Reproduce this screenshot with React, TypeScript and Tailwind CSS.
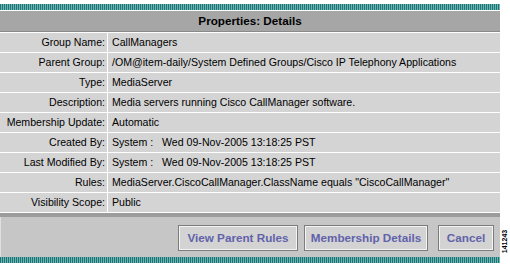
import React from "react";

const ROWS: [string, string][] = [
  ["Group Name:", "CallManagers"],
  ["Parent Group:", "/OM@item-daily/System Defined Groups/Cisco IP Telephony Applications"],
  ["Type:", "MediaServer"],
  ["Description:", "Media servers running Cisco CallManager software."],
  ["Membership Update:", "Automatic"],
  ["Created By:", "System :\u00a0\u00a0\u00a0Wed 09-Nov-2005 13:18:25 PST"],
  ["Last Modified By:", "System :\u00a0\u00a0\u00a0Wed 09-Nov-2005 13:18:25 PST"],
  ["Rules:", 'MediaServer.CiscoCallManager.ClassName equals "CiscoCallManager"'],
  ["Visibility Scope:", "Public"],
];

const stripe =
  "h-[6px] bg-[repeating-linear-gradient(90deg,#1e7474_0px,#1e7474_1px,#6fb4b4_1px,#6fb4b4_2px)]";

function Button({ label, className }: { label: string; className?: string }) {
  return (
    <button
      className={`h-[26px] border border-[#7c7c7c] bg-[#d3d3d3] shadow-[inset_1px_1px_0_#f4f4f4,inset_-1px_-1px_0_#f4f4f4] text-[11.7px] font-bold text-[#6262aa] ${className ?? ""}`}
    >
      {label}
    </button>
  );
}

export default function App() {
  return (
    <div className="relative w-[510px] h-[265px] bg-white font-['Liberation_Sans',Arial,sans-serif] text-black">
      <div className="w-[500px] pt-[4px]">
        <div className={stripe} />
        <div className="mt-[1px] h-[21px] bg-[#a6a6a6] border-b border-[#8a8a8a] flex items-center justify-center text-[11.7px] font-bold">
          Properties: Details
        </div>
        <div className="border-t border-white">
          {ROWS.map(([label, value]) => (
            <div key={label} className="flex h-[20px] border-b border-white text-[10.6px]">
              <div className="w-[108px] shrink-0 bg-[#d4d4d4] border-r border-white flex items-center justify-end pr-[2px] whitespace-nowrap">
                {label}
              </div>
              <div className="flex-1 bg-[#d4d4d4] flex items-center pl-[4px] whitespace-nowrap">
                {value}
              </div>
            </div>
          ))}
        </div>
        <div className="h-[4px] bg-[#9c9c9c]" />
        <div className="h-[40px] bg-[#c6c6c6] border-l border-[#e0e0e0] flex items-start justify-end pt-[8px] pr-[6px]">
          <Button label="View Parent Rules" className="w-[120px]" />
          <Button label="Membership Details" className="w-[124px] ml-[6px]" />
          <Button label="Cancel" className="w-[56px] ml-[10px]" />
        </div>
        <div className={stripe} />
      </div>
      <div className="absolute left-[500px] top-[228px] w-[10px] h-[26px] flex items-center justify-center">
        <span className="block -rotate-90 text-[7px] font-bold leading-none whitespace-nowrap">141243</span>
      </div>
    </div>
  );
}
